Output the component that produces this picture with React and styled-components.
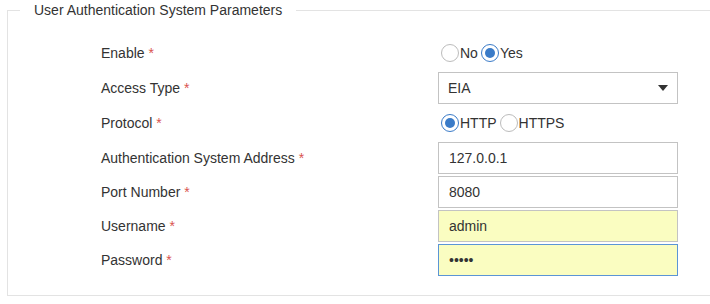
import styled, { createGlobalStyle } from 'styled-components';

const GlobalStyle = createGlobalStyle`
  html, body {
    margin: 0;
    padding: 0;
    background: #fff;
    overflow: hidden;
  }
  body {
    font-family: "Liberation Sans", Arial, sans-serif;
    font-size: 14px;
    color: #333;
  }
`;

const fields = [
  { label: 'Enable', kind: 'radio', options: ['No', 'Yes'], checked: 'Yes' },
  { label: 'Access Type', kind: 'select', value: 'EIA' },
  { label: 'Protocol', kind: 'radio', options: ['HTTP', 'HTTPS'], checked: 'HTTP' },
  { label: 'Authentication System Address', kind: 'text', value: '127.0.0.1' },
  { label: 'Port Number', kind: 'text', value: '8080' },
  { label: 'Username', kind: 'text', value: 'admin', filled: true },
  { label: 'Password', kind: 'password', value: 'admin', filled: true, focused: true },
];

export default function App() {
  return (
    <>
      <GlobalStyle />
      <Fieldset>
        <Legend>User Authentication System Parameters</Legend>
        <Form>
          {fields.map(field => (
            <Row key={field.label} $kind={field.kind}>
              <Label>
                {field.label} <Required>*</Required>
              </Label>
              <Control field={field} />
            </Row>
          ))}
        </Form>
      </Fieldset>
    </>
  );
}

function Control({ field }) {
  if (field.kind === 'radio') {
    return (
      <RadioGroup>
        {field.options.map(option => (
          <RadioOption key={option}>
            <RadioCircle $checked={option === field.checked} />
            <span>{option}</span>
          </RadioOption>
        ))}
      </RadioGroup>
    );
  }
  if (field.kind === 'select') {
    return (
      <Select>
        <span>{field.value}</span>
        <Caret />
      </Select>
    );
  }
  return (
    <Input
      type={field.kind}
      value={field.value}
      readOnly
      $filled={field.filled}
      $focused={field.focused}
    />
  );
}

const Fieldset = styled.fieldset`
  margin: 0 0 0 7px;
  padding: 16px 12px 19px;
  width: calc(100vw - 7px);
  min-width: 0;
  border: 1px solid #e3e3e3;
  border-right: 0;
  box-sizing: border-box;
`;

const Legend = styled.legend`
  padding: 0 14px;
  font-size: 14px;
  line-height: 20px;
  color: #333;
`;

const Form = styled.div`
  display: grid;
  gap: 2px;
  padding-left: 81px;
`;

const Row = styled.div`
  display: grid;
  grid-template-columns: 337px 240px;
  align-items: center;
  height: ${p => (p.$kind === 'radio' ? '34px' : '32px')};
`;

const Label = styled.div`
  color: #333;
  white-space: nowrap;
`;

const Required = styled.span`
  color: #d9534f;
`;

const RadioGroup = styled.div`
  display: flex;
  align-items: center;
  gap: 3px;
  padding-left: 3px;
`;

const RadioOption = styled.label`
  display: flex;
  align-items: center;
  gap: 1px;
  color: #333;
`;

const RadioCircle = styled.span`
  width: 18px;
  height: 18px;
  box-sizing: border-box;
  border-radius: 50%;
  border: 1px solid ${p => (p.$checked ? '#3a7bc8' : '#bcbcbc')};
  background: #fff;
  display: flex;
  align-items: center;
  justify-content: center;

  &::after {
    content: '';
    width: 10px;
    height: 10px;
    border-radius: 50%;
    background: #3a7bc8;
    display: ${p => (p.$checked ? 'block' : 'none')};
  }
`;

const Select = styled.div`
  height: 32px;
  box-sizing: border-box;
  border: 1px solid #c3c3c3;
  background: #fff;
  display: flex;
  align-items: center;
  justify-content: space-between;
  padding: 0 9px 0 9px;
  color: #333;
`;

const Caret = styled.span`
  width: 0;
  height: 0;
  border-left: 5px solid transparent;
  border-right: 5px solid transparent;
  border-top: 6px solid #333;
`;

const Input = styled.input`
  height: 32px;
  width: 240px;
  box-sizing: border-box;
  margin: 0;
  padding: 0 10px;
  font-family: "Liberation Sans", Arial, sans-serif;
  font-size: 14px;
  color: #333;
  outline: none;
  border: 1px solid ${p => (p.$focused ? '#5b95d6' : '#c3c3c3')};
  background: ${p => (p.$filled ? '#fafdc1' : '#fff')};
`;
